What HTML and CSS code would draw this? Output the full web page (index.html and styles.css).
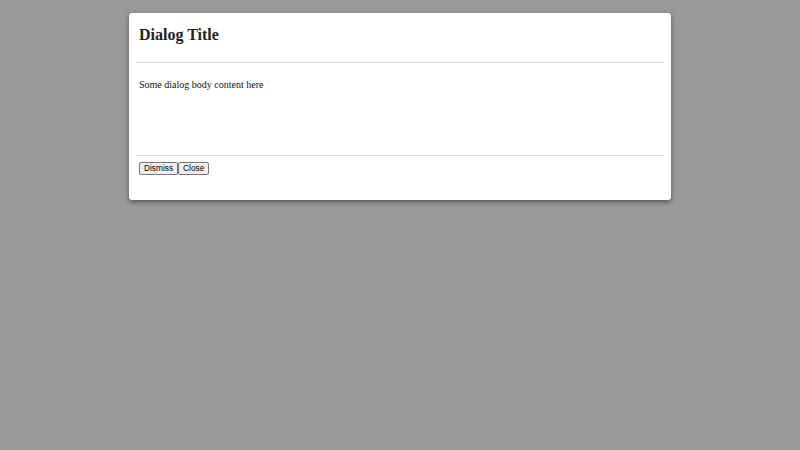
FILE: index.html
```html
<!DOCTYPE html>
<html>
<head>
<meta charset="utf-8">
<link rel="stylesheet" href="styles.css">
</head>
<body>
<div class="dialog">
  <div class="dialog-header">
    <h2 class="dialog-title">Dialog Title</h2>
  </div>
  <div class="dialog-body">
    <p class="dialog-text">Some dialog body content here</p>
  </div>
  <div class="dialog-footer">
    <button class="btn">Dismiss</button><button class="btn">Close</button>
  </div>
</div>
</body>
</html>
```

FILE: styles.css
```css
html, body {
  margin: 0;
  padding: 0;
  background: #999999;
  height: 100%;
}
.dialog {
  width: 542px;
  box-sizing: border-box;
  margin: 13px auto 0;
  background: #ffffff;
  border-radius: 3px;
  box-shadow: 0 2px 5px rgba(0, 0, 0, 0.45);
  padding: 0 7px;
  font-family: "Liberation Serif", "Times New Roman", serif;
}
.dialog-header {
  height: 50px;
  box-sizing: border-box;
  padding: 12px 3px 0;
  border-bottom: 1px solid #dddddd;
}
.dialog-title {
  margin: 0;
  font-size: 16px;
  line-height: 20px;
  font-weight: bold;
  color: #222222;
}
.dialog-body {
  height: 93px;
  box-sizing: border-box;
  padding: 16px 3px 0;
  border-bottom: 1px solid #dddddd;
}
.dialog-text {
  margin: 0;
  font-size: 10px;
  line-height: 12px;
  color: #111111;
}
.dialog-footer {
  height: 44px;
  box-sizing: border-box;
  padding: 6px 3px 0;
  display: flex;
  align-items: flex-start;
}
.btn {
  font-family: "Liberation Sans", Arial, sans-serif;
  font-size: 8.3px;
  line-height: 9px;
  height: 13px;
  box-sizing: border-box;
  padding: 1px 4px;
  margin: 0;
  border: 1px solid #767676;
  border-radius: 2px;
  background: #efefef;
  color: #000000;
}
```
